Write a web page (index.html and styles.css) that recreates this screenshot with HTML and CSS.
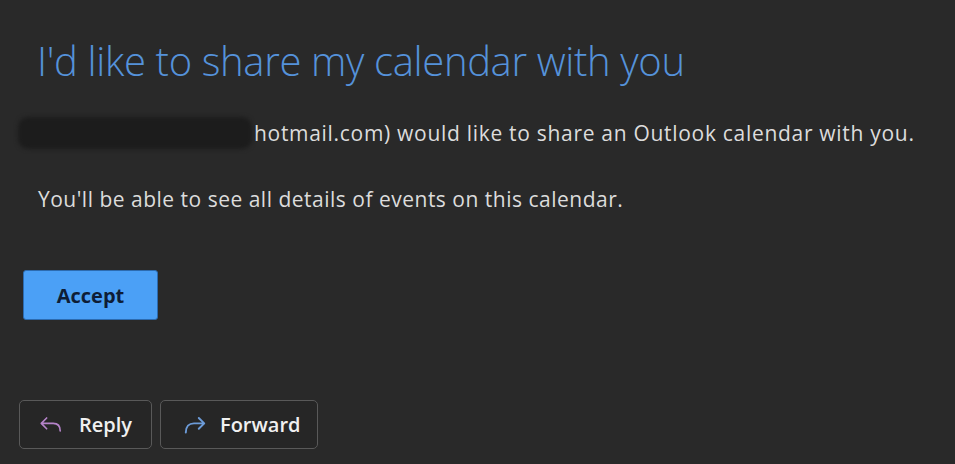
FILE: index.html
```html
<!DOCTYPE html>
<html>
<head>
<meta charset="utf-8">
<link rel="stylesheet" href="styles.css">
</head>
<body>
<main class="mail">
  <h1 class="title">I'd like to share my calendar with you</h1>
  <p class="line first"><span class="redact"></span>hotmail.com) would like to share an Outlook calendar with you.</p>
  <p class="line second">You'll be able to see all details of events on this calendar.</p>
  <div class="accept-row"><button class="accept">Accept</button></div>
  <div class="actions">
    <button class="action reply">
      <svg class="icon" viewBox="0 0 24 24" width="26" height="26"><path d="M8 5.5 L3 10.5 L8 15.5 M3 10.5 H14 C18 10.5 20.5 13 20.5 17.5" fill="none" stroke="#b583c9" stroke-width="1.5" stroke-linecap="round" stroke-linejoin="round"/></svg>
      <span>Reply</span>
    </button>
    <button class="action forward">
      <svg class="icon" viewBox="0 0 24 24" width="26" height="26"><path d="M3.5 19 C3.5 13.5 6.5 10.5 11 10.5 H20.5 M15.5 5.5 L20.5 10.5 L15.5 15.5" fill="none" stroke="#6c9bd8" stroke-width="1.8" stroke-linecap="round" stroke-linejoin="round"/></svg>
      <span>Forward</span>
    </button>
  </div>
</main>
</body>
</html>
```
FILE: styles.css
```css
html, body {
  margin: 0;
  padding: 0;
  background: #292929;
}
body {
  width: 955px;
  height: 464px;
  overflow: hidden;
  font-family: "Open Sans", "Noto Sans", sans-serif;
}
.mail {
  padding: 34px 0 0 0;
}
.title {
  margin: 0 0 0 37px;
  font-weight: 300;
  font-size: 40px;
  line-height: 54px;
  color: #5592da;
  letter-spacing: -0.35px;
}
.line {
  margin: 0;
  color: #dcdcdc;
  font-size: 21px;
  line-height: 28px;
}
.first {
  margin-top: 29px;
  margin-left: 18px;
  display: flex;
  align-items: center;
  letter-spacing: 0.7px;
}
.redact {
  display: inline-block;
  width: 234px;
  height: 32px;
  background: #1c1c1c;
  border-radius: 10px;
  filter: blur(2px);
  margin-right: 2px;
}
.second {
  margin-top: 36px;
  margin-left: 38px;
  letter-spacing: 0.5px;
}
.accept-row {
  margin-top: 57px;
  margin-left: 23px;
}
.accept {
  width: 135px;
  height: 50px;
  border: 1px solid #2c6bb0;
  border-radius: 3px;
  background: #4ba0f6;
  color: #0e1d36;
  font-family: "Open Sans", sans-serif;
  font-weight: 700;
  font-size: 20px;
  padding: 0;
}
.actions {
  margin-top: 80px;
  margin-left: 19px;
  display: flex;
  gap: 8px;
}
.action {
  height: 49px;
  display: flex;
  align-items: center;
  gap: 15px;
  background: #262626;
  border: 1px solid #595959;
  border-radius: 5px;
  color: #f0f0f0;
  font-family: "Open Sans", sans-serif;
  font-size: 20px;
  font-weight: 600;
  padding: 0 0 0 18px;
}
.reply { width: 133px; }
.forward { width: 158px; padding-left: 21px; gap: 12px; }
.icon { flex: none; }
```
